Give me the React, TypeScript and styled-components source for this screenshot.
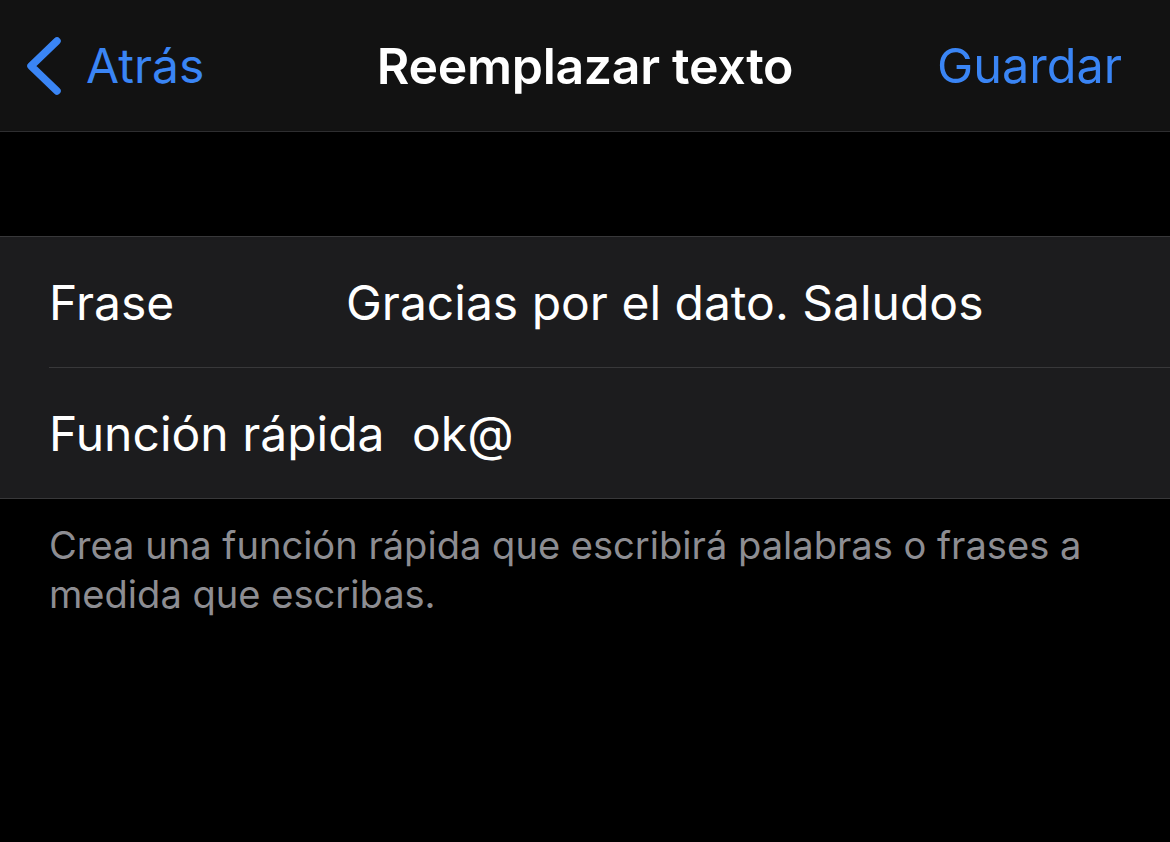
import React from 'react';
import styled, { createGlobalStyle } from 'styled-components';

const GlobalStyle = createGlobalStyle`
  html, body {
    margin: 0;
    padding: 0;
    background: #000;
  }
  body {
    font-family: Inter, 'Noto Sans', sans-serif;
    -webkit-font-smoothing: antialiased;
  }
`;

const Screen = styled.div`
  width: 1170px;
  min-height: 842px;
  background: #000;
  overflow: hidden;
`;

const NavBar = styled.header`
  height: 132px;
  background: #121212;
  border-bottom: 1px solid #2e2e30;
  display: grid;
  grid-template-columns: 1fr auto 1fr;
  align-items: center;
  padding: 0 26px;
  box-sizing: border-box;
`;

const BackButton = styled.button`
  display: flex;
  align-items: center;
  gap: 24px;
  background: none;
  border: 0;
  padding: 0;
  color: #3a85f5;
  font: inherit;
  font-size: 48px;
  justify-self: start;
  cursor: pointer;
`;

const Title = styled.h1`
  margin: 0;
  color: #fff;
  font-size: 50px;
  font-weight: 600;
  letter-spacing: -0.3px;
`;

const SaveButton = styled.button`
  background: none;
  border: 0;
  padding: 0;
  margin-right: 22px;
  color: #3a85f5;
  font: inherit;
  font-size: 48.6px;
  justify-self: end;
  cursor: pointer;
`;

const Spacer = styled.div`
  height: 104px;
`;

const Group = styled.section`
  background: #1c1c1e;
  border-top: 1px solid #38383a;
  border-bottom: 1px solid #38383a;
`;

const Row = styled.div<{ $divider?: boolean }>`
  height: 130px;
  margin-left: 49px;
  display: flex;
  align-items: center;
  border-bottom: ${(p) => (p.$divider ? '1px solid #38383a' : '0')};
`;

const Label = styled.span<{ $width: number }>`
  width: ${(p) => p.$width}px;
  flex-shrink: 0;
  color: #fff;
  font-size: 48px;
`;

const Value = styled.span`
  color: #fff;
  font-size: 48px;
`;

const Footer = styled.p`
  margin: 0;
  padding: 22px 60px 0 49px;
  color: #8d8d92;
  font-size: 38.1px;
  line-height: 49px;
`;

const Chevron = () => (
  <svg width="36" height="58" viewBox="0 0 36 58" aria-hidden="true">
    <path
      d="M31 4 L5 29 L31 54"
      fill="none"
      stroke="#3a85f5"
      strokeWidth="7.5"
      strokeLinecap="round"
      strokeLinejoin="round"
    />
  </svg>
);

const App = () => (
  <Screen>
    <GlobalStyle />
    <NavBar>
      <BackButton>
        <Chevron />
        Atrás
      </BackButton>
      <Title>Reemplazar texto</Title>
      <SaveButton>Guardar</SaveButton>
    </NavBar>
    <Spacer />
    <Group>
      <Row $divider>
        <Label $width={297}>Frase</Label>
        <Value>Gracias por el dato. Saludos</Value>
      </Row>
      <Row>
        <Label $width={363}>Función rápida</Label>
        <Value>ok@</Value>
      </Row>
    </Group>
    <Footer>
      Crea una función rápida que escribirá palabras o frases a medida que escribas.
    </Footer>
  </Screen>
);

export default App;
